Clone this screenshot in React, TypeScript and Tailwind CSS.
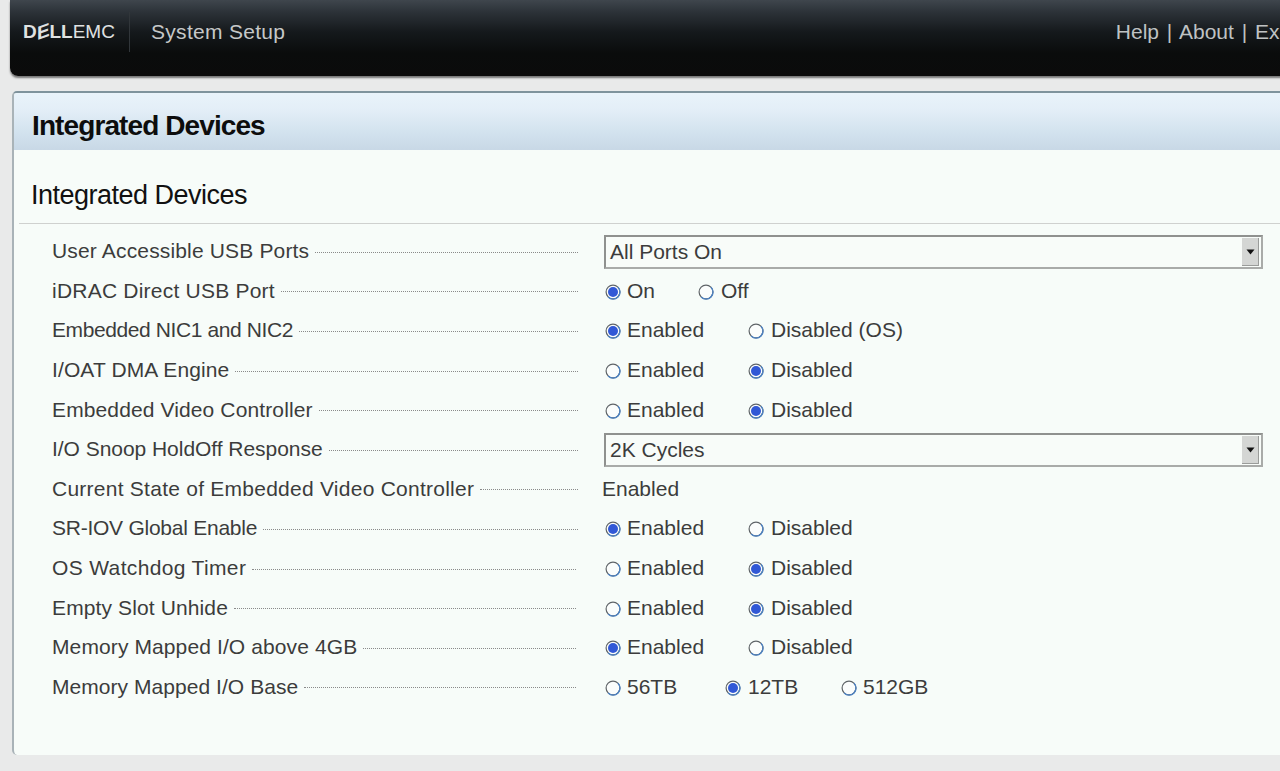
const rows = [
  { label: "User Accessible USB Ports", select: "All Ports On", fit: "tracking-[0.16px]" },
  { label: "iDRAC Direct USB Port", widths: [93, 60], options: ["On", "Off"], checked: 0, fit: "tracking-[0.22px]" },
  { label: "Embedded NIC1 and NIC2", widths: [143, 160], options: ["Enabled", "Disabled (OS)"], checked: 0, fit: "tracking-[-0.4px]" },
  { label: "I/OAT DMA Engine", widths: [143, 160], options: ["Enabled", "Disabled"], checked: 1, fit: "tracking-[0.12px]" },
  { label: "Embedded Video Controller", widths: [143, 160], options: ["Enabled", "Disabled"], checked: 1, fit: "tracking-[0.12px]" },
  { label: "I/O Snoop HoldOff Response", select: "2K Cycles", fit: "tracking-[-0.04px]" },
  { label: "Current State of Embedded Video Controller", value: "Enabled", fit: "tracking-[0.25px]" },
  { label: "SR-IOV Global Enable", widths: [143, 160], options: ["Enabled", "Disabled"], checked: 0, fit: "tracking-[-0.25px]" },
  { label: "OS Watchdog Timer", short: true, widths: [143, 160], options: ["Enabled", "Disabled"], checked: 1, fit: "tracking-[0.35px]" },
  { label: "Empty Slot Unhide", short: true, widths: [143, 160], options: ["Enabled", "Disabled"], checked: 1, fit: "tracking-[0.12px]" },
  { label: "Memory Mapped I/O above 4GB", short: true, widths: [143, 160], options: ["Enabled", "Disabled"], checked: 0, fit: "tracking-[0.11px]" },
  { label: "Memory Mapped I/O Base", short: true, widths: [120, 116, 100], options: ["56TB", "12TB", "512GB"], checked: 1, fit: "tracking-[0.05px]" },
];

function Radio({ on }: { on: boolean }) {
  return (
    <svg width="16" height="16" viewBox="0 0 16 16" className="mt-[3px] shrink-0">
      <circle cx="8" cy="8" r="6.9" fill="#fbfdfc" stroke="#5f6468" strokeWidth="1.2" />
      <path d="M13 3.2A6.9 6.9 0 0 1 3.2 13" fill="none" stroke="#4c82c4" strokeWidth="1.3" />
      {on && <circle cx="8" cy="8" r="5" fill="#3158d6" />}
    </svg>
  );
}

function Select({ value }: { value: string }) {
  return (
    <div className="mt-[3px] flex h-[34px] w-[659px] items-center justify-between border-2 border-[#a9aba9] border-t-[#8f918f] border-l-[#8f918f] bg-[#f8fcf9] pr-[2px] pl-[4px]">
      <span className="-mt-[2px]">{value}</span>
      <div className="flex h-[28px] w-[17px] items-center justify-center border-r border-b border-[#9a9c9a] bg-[#d4d6d4]">
        <svg width="9" height="6" viewBox="0 0 9 6">
          <path d="M0.5 0.5H8.5L4.5 5.5Z" fill="#111" />
        </svg>
      </div>
    </div>
  );
}

export default function App() {
  return (
    <div className="h-[771px] w-[1280px] overflow-hidden bg-[#e9eaea] pl-[10px] font-['Liberation_Sans',Arial,sans-serif]">
      <header className="flex h-[76px] w-[1300px] items-center rounded-bl-lg bg-[linear-gradient(#3f464d_0%,#2c3238_16%,#15191c_42%,#0a0c0c_70%,#0b0b0b_100%)] pb-[12px] shadow-[0_2px_2px_#777]">
        <div className="flex w-[119px] items-baseline pl-[13px] text-[19px] text-[#e0e2e2]">
          <span className="font-bold">D</span>
          <span className="inline-block skew-y-[-20deg] font-bold">E</span>
          <span className="font-bold">LL</span>
          <span>EMC</span>
        </div>
        <div className="h-[40px] w-px bg-[#31363a]" />
        <div className="ml-[21px] text-[21px] tracking-[0.3px] text-[#c6c8c8]">System Setup</div>
        <div className="ml-auto pr-[20px] text-[21px] whitespace-nowrap text-[#bfc2c3]">
          Help <span className="mx-[2px]">|</span> About <span className="mx-[2px]">|</span> Exit
        </div>
      </header>
      <main className="mt-[15px] ml-[2px] h-[664px] w-[1300px] overflow-hidden rounded-tl-[5px] rounded-bl-[5px] border-t-2 border-l-2 border-[#7f939c] border-l-[#a9b3b8] bg-[#f7fcf9]">
        <div className="flex h-[57px] items-center bg-[linear-gradient(#e9f3fa_0%,#e3eef7_30%,#d2e2ee_70%,#c8d8e6_100%)] pt-[8px] pl-[18px] text-[28px] font-bold tracking-[-0.9px] text-[#0d0d0d]">
          Integrated Devices
        </div>
        <div className="ml-[5px] flex h-[74px] items-center border-b border-[#cfd1cf] pt-[17px] pl-[12px] text-[27px] tracking-[-0.5px] text-[#111]">
          Integrated Devices
        </div>
        <div className="pt-[7px] pl-[38px] text-[21px] leading-[23px] text-[#3c3c3c]">
          {rows.map((row) => (
            <div key={row.label} className="flex h-[39.6px] items-center">
              <div className={`flex items-center ${row.short ? "w-[524px]" : "w-[526px]"}`}>
                <span className={`whitespace-nowrap ${row.fit}`}>{row.label}</span>
                <span className="mt-[3px] ml-[6px] flex-1 border-b border-dotted border-[#8a8a8a]" />
              </div>
              <div className={`${row.short ? "ml-[29px]" : "ml-[27px]"} flex items-center`}>
                {row.select && <div className="-ml-[1px]"><Select value={row.select} /></div>}
                {row.value && <span className="-ml-[3px]">{row.value}</span>}
                {row.options?.map((option, i) => (
                  <div key={option} className={`flex items-center ${i === 1 ? "gap-[7px]" : "gap-[6px]"}`} style={{ width: row.widths[i] }}>
                    <Radio on={row.checked === i} />
                    <span>{option}</span>
                  </div>
                ))}
              </div>
            </div>
          ))}
        </div>
      </main>
    </div>
  );
}
